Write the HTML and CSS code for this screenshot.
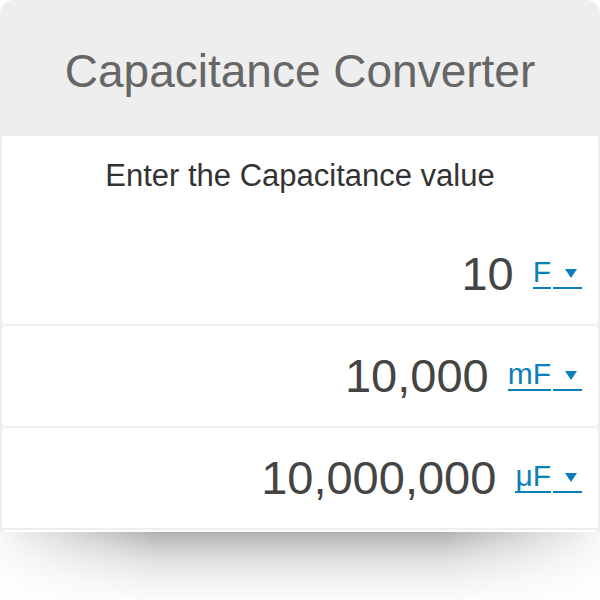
FILE: index.html
```html
<!DOCTYPE html>
<html lang="en">
<head>
<meta charset="utf-8">
<title>Capacitance Converter</title>
<link rel="stylesheet" href="styles.css">
</head>
<body>
<div class="widget">
  <header class="head">
    <h1 class="title">Capacitance Converter</h1>
  </header>
  <div class="rows">
    <section class="row row-first">
      <p class="label">Enter the Capacitance value</p>
      <div class="field">
        <span class="value">10</span>
        <span class="unit">
          <span class="unit-text">F</span>
          <span class="unit-arrow"><svg width="12" height="9" viewBox="0 0 12 9"><path d="M0 0H12L6 9Z" fill="currentColor"/></svg></span>
        </span>
      </div>
    </section>
    <section class="row">
      <div class="field">
        <span class="value">10,000</span>
        <span class="unit">
          <span class="unit-text">mF</span>
          <span class="unit-arrow"><svg width="12" height="9" viewBox="0 0 12 9"><path d="M0 0H12L6 9Z" fill="currentColor"/></svg></span>
        </span>
      </div>
    </section>
    <section class="row">
      <div class="field">
        <span class="value">10,000,000</span>
        <span class="unit">
          <span class="unit-text">μF</span>
          <span class="unit-arrow"><svg width="12" height="9" viewBox="0 0 12 9"><path d="M0 0H12L6 9Z" fill="currentColor"/></svg></span>
        </span>
      </div>
    </section>
    <section class="row row-stub"></section>
  </div>
</div>
<div class="drop-shadow"></div>
</body>
</html>
```

FILE: styles.css
```css
html, body {
  margin: 0;
  padding: 0;
  background: #fff;
}

body {
  font-family: "Liberation Sans", Arial, sans-serif;
}

.widget {
  width: 600px;
  height: 532px;
  box-sizing: border-box;
  background: #eeeeee;
  border-radius: 14px 14px 0 0;
  overflow: hidden;
}

/* soft shadow cast below the cut-off card */
.drop-shadow {
  width: 600px;
  height: 68px;
  background: linear-gradient(to bottom,
    rgba(0, 0, 0, 0.30) 0,
    rgba(0, 0, 0, 0.20) 14px,
    rgba(0, 0, 0, 0.12) 28px,
    rgba(0, 0, 0, 0.05) 48px,
    rgba(0, 0, 0, 0.015) 68px);
  -webkit-mask-image: linear-gradient(to right, rgba(0, 0, 0, 0.12), #000 26%, #000 74%, rgba(0, 0, 0, 0.12));
  mask-image: linear-gradient(to right, rgba(0, 0, 0, 0.12), #000 26%, #000 74%, rgba(0, 0, 0, 0.12));
}

.head {
  height: 136px;
  box-sizing: border-box;
  padding-top: 6px;
}

.title {
  margin: 0;
  font-weight: normal;
  font-size: 46px;
  line-height: 130px;
  text-align: center;
  color: #666666;
}

.rows {
  display: flex;
  flex-direction: column;
  gap: 2px;
  padding: 0 2px;
}

.row {
  background: #ffffff;
  border-radius: 3px;
}

.label {
  margin: 0;
  height: 88px;
  box-sizing: border-box;
  padding-top: 22px;
  font-size: 31px;
  line-height: 36px;
  text-align: center;
  color: #333333;
}

.field {
  height: 100px;
  box-sizing: border-box;
  padding: 26px 16px 0 0;
  display: flex;
  justify-content: flex-end;
  align-items: flex-start;
}

.value {
  font-size: 47px;
  line-height: 47px;
  color: #444444;
}

.unit {
  margin: 7px 0 0 19px;
  display: flex;
  align-items: flex-start;
  gap: 2px;
  color: #0b7fb9;
  font-size: 30px;
  line-height: 30px;
}

.unit-text {
  border-bottom: 2px solid currentColor;
}

.unit-arrow {
  height: 30px;
  padding: 0 5px 0 12px;
  border-bottom: 2px solid currentColor;
}

.unit-arrow svg {
  display: block;
  margin-top: 12px;
}

.row-stub {
  height: 20px;
}
```
